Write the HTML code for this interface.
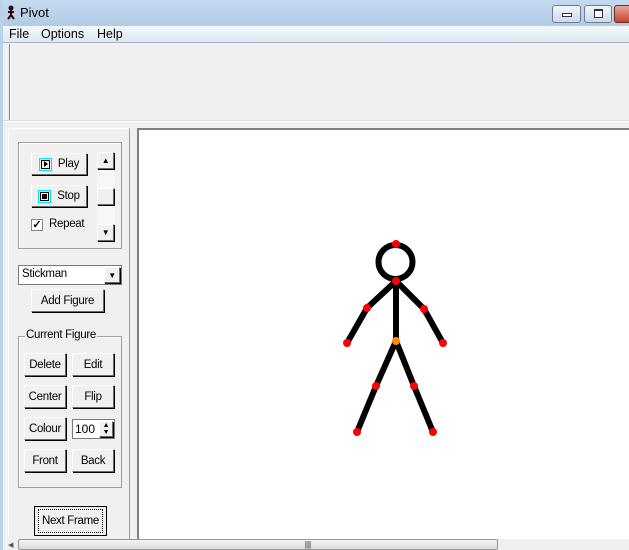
<!DOCTYPE html>
<html><head><style>
*{box-sizing:border-box;margin:0;padding:0}
body{width:629px;height:550px;overflow:hidden;position:relative;background:#f0f0f0;font-family:"Liberation Sans",sans-serif;font-size:12px;color:#000}
.abs{position:absolute}
.btn{position:absolute;background:#f0f0f0;border:1px solid;border-color:#fff #696969 #696969 #fff;box-shadow:1px 1px 0 #000;display:flex;align-items:center;justify-content:center;font-size:11.5px;letter-spacing:-0.3px}
.grp{position:absolute;border:1px solid #a0a0a0;box-shadow:1px 1px 0 #fff inset}
</style></head><body>
<div class="abs" style="left:0;top:0;width:629px;height:26px;background:linear-gradient(#c4d9ef,#b2cbe6)"></div>
<div class="abs" style="left:0;top:0;width:3px;height:550px;background:#b9d1ea"></div>
<svg class="abs" style="left:6px;top:5px" width="10" height="15"><circle cx="5" cy="3" r="2.5" fill="#300"/><path d="M5 5v5M2 7h6M5 10l-3 4M5 10l3 4" stroke="#300" stroke-width="2" fill="none"/></svg>
<div class="abs" style="left:20px;top:5px;font-size:13px">Pivot</div>
<div class="abs" style="left:552px;top:5px;width:29px;height:18px;border:1px solid #6c7d94;border-radius:3px;background:linear-gradient(#f2f6fb,#ccd9ea)"><div class="abs" style="left:9px;top:7px;width:10px;height:4px;border:1px solid #333;background:#fff"></div></div>
<div class="abs" style="left:584px;top:5px;width:28px;height:18px;border:1px solid #6c7d94;border-radius:3px;background:linear-gradient(#f2f6fb,#ccd9ea)"><div class="abs" style="left:9px;top:3px;width:9px;height:9px;border:1px solid #333;border-top-width:2px;background:#fff"></div></div>
<div class="abs" style="left:614px;top:5px;width:20px;height:18px;border:1px solid #6b2a22;border-radius:3px;background:linear-gradient(#e8a697,#c4452e)"></div>
<div class="abs" style="left:3px;top:26px;width:626px;height:17px;background:linear-gradient(#f5f8fc,#dde6f2);border-bottom:1px solid #a9b5c7"></div>
<div class="abs" style="left:9px;top:26px;font-size:12.5px;line-height:16px">File</div>
<div class="abs" style="left:41px;top:26px;font-size:12.5px;line-height:16px">Options</div>
<div class="abs" style="left:97px;top:26px;font-size:12.5px;line-height:16px">Help</div>
<div class="abs" style="left:9px;top:44px;width:2px;height:77px;border-left:1px solid #808080;border-right:1px solid #fff"></div>
<div class="abs" style="left:3px;top:120px;width:626px;height:2px;border-top:1px solid #d8d8d8;border-bottom:1px solid #fff"></div>
<div class="abs" style="left:8px;top:128px;width:122px;height:412px;border:1px solid;border-color:#fff #a0a0a0 #a0a0a0 #fff"></div>
<div class="abs" style="left:137px;top:128px;width:492px;height:412px;border-top:2px solid #808080;border-left:2px solid #808080;background:#fff"></div>
<div class="grp" style="left:18px;top:142px;width:104px;height:107px"></div>
<div class="btn" style="left:31px;top:153px;width:56px;height:22px"><span style="width:13px;height:13px;border:1px solid #00e0ff;display:inline-block;margin-right:6px;position:relative"><span style="position:absolute;left:1px;top:1px;width:9px;height:9px;border:1px solid #000"></span><span style="position:absolute;left:4px;top:2px;border-left:4px solid #000;border-top:3.5px solid transparent;border-bottom:3.5px solid transparent"></span></span>Play</div>
<div class="btn" style="left:31px;top:185px;width:56px;height:22px"><span style="width:13px;height:13px;border:1px solid #00e0ff;display:inline-block;margin-right:6px;position:relative"><span style="position:absolute;left:1px;top:1px;width:9px;height:9px;border:1px solid #000"></span><span style="position:absolute;left:3px;top:3px;width:5px;height:5px;background:#000"></span></span>Stop</div>
<div class="abs" style="left:31px;top:219px;width:12px;height:12px;border:1px solid #888;background:#fff;font-size:11px;line-height:10px;text-align:center;font-weight:bold">✓</div>
<div class="abs" style="left:49px;top:218px;font-size:11.5px;letter-spacing:-0.3px">Repeat</div>
<div class="abs" style="left:97px;top:152px;width:18px;height:90px;background:repeating-conic-gradient(#f0f0f0 0 25%,#fff 0 50%) 0 0/2px 2px"></div>
<div class="btn" style="left:97px;top:152px;width:17px;height:17px;font-size:8px">▲</div>
<div class="btn" style="left:97px;top:188px;width:17px;height:17px"></div>
<div class="btn" style="left:97px;top:224px;width:17px;height:17px;font-size:8px">▼</div>
<div class="abs" style="left:18px;top:265px;width:104px;height:20px;border:1px solid #7a7a7a;background:#fff;padding:2px 3px;font-size:11.5px;letter-spacing:-0.3px">Stickman</div>
<div class="btn" style="left:104px;top:267px;width:16px;height:16px;font-size:8px">▼</div>
<div class="btn" style="left:31px;top:289px;width:73px;height:23px">Add Figure</div>
<div class="grp" style="left:18px;top:336px;width:104px;height:152px"></div>
<div class="abs" style="left:25px;top:329px;background:#f0f0f0;padding:0 1px;font-size:11.5px;letter-spacing:-0.3px">Current Figure</div>
<div class="btn" style="left:24px;top:353px;width:42px;height:23px">Delete</div>
<div class="btn" style="left:72px;top:353px;width:42px;height:23px">Edit</div>
<div class="btn" style="left:24px;top:385px;width:42px;height:23px">Center</div>
<div class="btn" style="left:72px;top:385px;width:42px;height:23px">Flip</div>
<div class="btn" style="left:24px;top:417px;width:42px;height:23px">Colour</div>
<div class="abs" style="left:72px;top:419px;width:43px;height:20px;border:1px solid #7a7a7a;background:#fff;padding:2px 2px">100</div>
<div class="btn" style="left:99px;top:421px;width:14px;height:16px;font-size:7px;line-height:7px;flex-direction:column">▲<br>▼</div>
<div class="btn" style="left:24px;top:449px;width:42px;height:23px">Front</div>
<div class="btn" style="left:72px;top:449px;width:42px;height:23px">Back</div>
<div class="btn" style="left:34px;top:506px;width:73px;height:30px;border:1px solid #000;box-shadow:none"><span style="border:1px dotted #000;padding:5px 3px">Next Frame</span></div>
<div class="abs" style="left:3px;top:539px;width:626px;height:11px;background:#f0f0f0"></div>
<div class="abs" style="left:8px;top:541px;font-size:7px;color:#555">◀</div>
<div class="abs" style="left:18px;top:539px;width:480px;height:11px;border:1px solid #979797;border-radius:2px;background:linear-gradient(#f3f3f3,#dcdcdc);font-size:8px;text-align:center;line-height:10px;padding-left:100px">|||</div>
<svg class="abs" style="left:0;top:0" width="629" height="550">
<g stroke="#000" stroke-width="6" fill="none" stroke-linecap="round">
<circle cx="395.5" cy="262" r="17"/>
<path d="M396 281L396 341M396 281L367 308L347 343M396 281L424 309L443 343M396 341L376 386L357 432M396 341L414 386L433 432"/>
</g>
<g fill="#f00">
<circle cx="396" cy="244" r="4"/><circle cx="396" cy="281" r="4"/><circle cx="367" cy="308" r="4"/><circle cx="424" cy="309" r="4"/><circle cx="347" cy="343" r="4"/><circle cx="443" cy="343" r="4"/><circle cx="376" cy="386" r="4"/><circle cx="414" cy="386" r="4"/><circle cx="357" cy="432" r="4"/><circle cx="433" cy="432" r="4"/>
</g>
<circle cx="396" cy="341" r="4" fill="#ff8c00"/>
</svg>
</body></html>
